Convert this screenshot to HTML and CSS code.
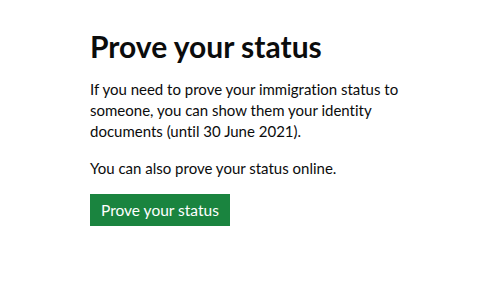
FILE: index.html
```html
<!DOCTYPE html>
<html lang="en">
<head>
<meta charset="utf-8">
<title>Prove your status</title>
<link rel="stylesheet" href="styles.css">
</head>
<body>
<main class="page">
  <h1 class="heading">Prove your status</h1>
  <p class="body">If you need to prove your immigration status to someone, you can show them your identity documents (until 30 June 2021).</p>
  <p class="body body-last">You can also prove your status online.</p>
  <a class="button" href="#">Prove your status</a>
</main>
</body>
</html>
```

FILE: styles.css
```css
html, body {
  margin: 0;
  padding: 0;
  background: #ffffff;
}
.page {
  display: flex;
  flex-direction: column;
  align-items: flex-start;
  padding: 28px 0 0 90px;
  font-family: Lato, "Liberation Sans", sans-serif;
  font-variant-ligatures: none;
  color: #0b0c0c;
  width: 340px;
}
.heading {
  margin: 0 0 15px;
  font-size: 30px;
  line-height: 36px;
  font-weight: 700;
}
.body {
  margin: 0 0 16px;
  font-size: 15px;
  line-height: 21px;
}
.body-last {
  margin-bottom: 15px;
}
.button {
  display: block;
  padding: 6px 11px;
  background: #1a843f;
  color: #ffffff;
  text-decoration: none;
  font-size: 15.5px;
  line-height: 20px;
  box-shadow: 0 2px 0 #0a4a22;
}
```
